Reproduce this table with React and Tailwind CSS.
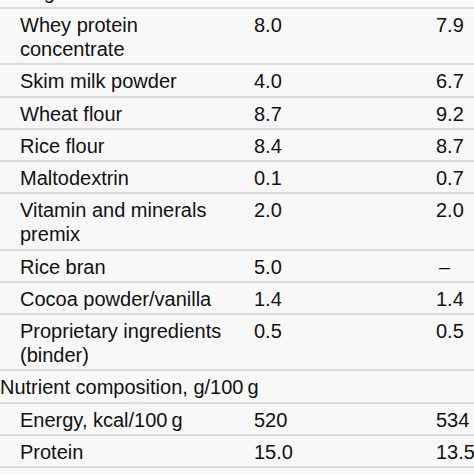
const rows = [
    { label: ["Whey protein", "concentrate"], a: "8.0", b: "7.9" },
    { label: ["Skim milk powder"], a: "4.0", b: "6.7" },
    { label: ["Wheat flour"], a: "8.7", b: "9.2" },
    { label: ["Rice flour"], a: "8.4", b: "8.7" },
    { label: ["Maltodextrin"], a: "0.1", b: "0.7" },
    { label: ["Vitamin and minerals", "premix"], a: "2.0", b: "2.0" },
    { label: ["Rice bran"], a: "5.0", b: "–" },
    { label: ["Cocoa powder/vanilla"], a: "1.4", b: "1.4" },
    { label: ["Proprietary ingredients", "(binder)"], a: "0.5", b: "0.5" },
];

const nutrients = [
    { label: ["Energy, kcal/100\u2009g"], a: "520", b: "534" },
    { label: ["Protein"], a: "15.0", b: "13.5" },
];

function Row({ label, a, b }) {
    return (
        <div className="grid grid-cols-[254px_182px_1fr] border-t-2 border-[#dcdcdc] pt-[4px] pb-[2.25px] whitespace-nowrap">
            <div className="pl-[20px]">
                {label.map((line, i) => (
                    <div key={i}>{line}</div>
                ))}
            </div>
            <div>{a}</div>
            <div className={b === "–" ? "pl-[3px]" : ""}>{b}</div>
        </div>
    );
}

export default function App() {
    return (
        <div
            className="w-[474px] h-[474px] overflow-hidden bg-[#f8f8f8] text-[#111] text-[20px] leading-[24px]"
            style={{ fontFamily: '"Liberation Sans", Arial, sans-serif' }}
        >
            {/* previous section header, mostly cut off */}
            <div className="mt-[-22px] h-[29px] pl-[27px] pt-[2px] whitespace-nowrap">
                Ingredients
            </div>

            {rows.map((r, i) => (
                <Row key={i} {...r} />
            ))}

            <div className="border-t-2 border-[#dcdcdc] pt-[4px] pb-[2.25px] whitespace-nowrap">
                Nutrient composition, g/100{"\u2009"}g
            </div>

            {nutrients.map((r, i) => (
                <Row key={i} {...r} />
            ))}

            {/* next row starts below the visible area */}
            <div className="border-t-2 border-[#dcdcdc] h-[30px]" />
        </div>
    );
}
